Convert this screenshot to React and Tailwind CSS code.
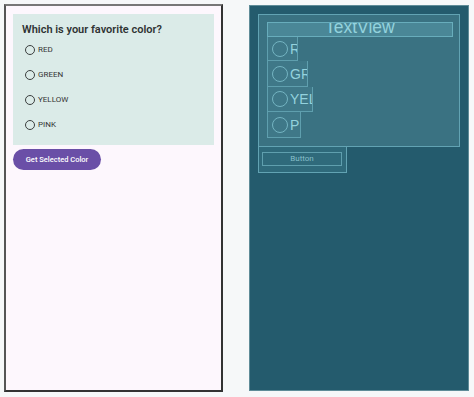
import React from 'react';

const options = ['RED', 'GREEN', 'YELLOW', 'PINK'];

const blueprintRadios = [
  { label: 'R', w: 'w-[31px]', h: 'h-[24px]' },
  { label: 'GR', w: 'w-[41px]', h: 'h-[26px]' },
  { label: 'YEL', w: 'w-[46px]', h: 'h-[25px]' },
  { label: 'P', w: 'w-[34px]', h: 'h-[26px]' },
];

const App = () => {
  return (
    <main className="flex h-[397px] w-[474px] items-start bg-[#f6f8f9] font-['Roboto',sans-serif]">
      {/* design preview */}
      <section className="ml-[4px] mt-[4px] h-[388px] w-[219px] border-2 border-b-[#333] border-l-[#555] border-r-[#333] border-t-[#777] bg-[#fdf7fd] px-[7px] pt-[8px]">
        <div className="bg-[#dbebe8] pb-[8px] pl-[9px] pt-[9px]">
          <h2 className="text-[11px] font-semibold leading-[14px] text-[#2f3333]">Which is your favorite color?</h2>
          {options.map((opt) => (
            <label key={opt} className="flex h-[25px] items-center pl-[3px]">
              <span className="h-[10px] w-[10px] rounded-full border-[1.5px] border-[#3b3f3f]" />
              <span className="ml-[3px] text-[8px] font-normal leading-none text-[#333]">{opt}</span>
            </label>
          ))}
        </div>
        <button
          type="button"
          className="mt-[2px] h-[21px] w-[88px] rounded-full bg-[#6a4fa7] text-[7.5px] font-medium text-white"
        >
          Get Selected Color
        </button>
      </section>

      {/* blueprint */}
      <section className="ml-[26px] mt-[5px] h-[386px] w-[220px] border border-[#5f8c98] bg-[#245b6d] pl-[8px] pt-[8px]">
        <div className="h-[133px] w-[202px] border border-[#62a3b3] bg-[#3a7282] pl-[8px] pt-[7px]">
          <div className="h-[15px] w-[186px] overflow-hidden border border-[#68adbc] bg-[#4a8797]">
            <p className="-mt-[6px] ml-[57px] font-['Liberation_Sans',sans-serif] text-[17.5px] leading-[20px] text-[#93d2dd]">
              TextView
            </p>
          </div>
          {blueprintRadios.map((r) => (
            <div
              key={r.label}
              className={`${r.w} ${r.h} flex items-center overflow-hidden border border-t-0 border-[#5f9fae] bg-[#3f7888] pl-[4px]`}
            >
              <span className="h-[16px] w-[16px] shrink-0 rounded-full border border-[#74b4c2]" />
              <span className="ml-[2px] font-['Liberation_Sans',sans-serif] text-[14px] leading-none text-[#93d2dd]">{r.label}</span>
            </div>
          ))}
        </div>
        <div className="h-[26px] w-[89px] border border-t-0 border-[#62a3b3] bg-[#2f6a7b] pl-[3px] pt-[5px]">
          <div className="flex h-[14px] w-[80px] items-center justify-center border border-[#5f9fae] text-[8px] font-normal leading-none text-[#86bfc9]">
            Button
          </div>
        </div>
      </section>
    </main>
  );
};

export default App;
